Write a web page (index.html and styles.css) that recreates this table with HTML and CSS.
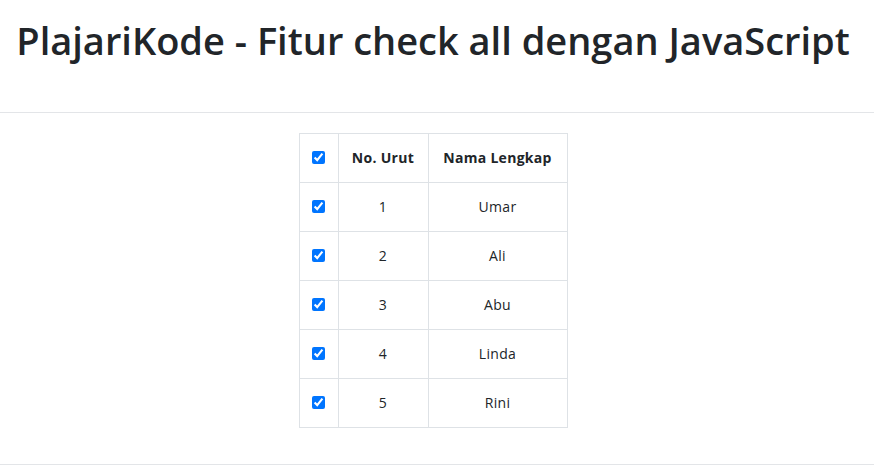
FILE: index.html
```html
<!DOCTYPE html>
<html lang="id">
<head>
<meta charset="utf-8">
<title>PlajariKode - Fitur check all dengan JavaScript</title>
<link rel="stylesheet" href="styles.css">
</head>
<body>
<header class="page-head">
  <h1 class="title">PlajariKode - Fitur check all dengan JavaScript</h1>
</header>
<hr class="rule">
<main class="content">
  <table class="data">
    <thead>
      <tr>
        <th class="col-check"><input type="checkbox" checked></th>
        <th class="col-no">No. Urut</th>
        <th class="col-name">Nama Lengkap</th>
      </tr>
    </thead>
    <tbody>
      <tr><td class="col-check"><input type="checkbox" checked></td><td>1</td><td>Umar</td></tr>
      <tr><td class="col-check"><input type="checkbox" checked></td><td>2</td><td>Ali</td></tr>
      <tr><td class="col-check"><input type="checkbox" checked></td><td>3</td><td>Abu</td></tr>
      <tr><td class="col-check"><input type="checkbox" checked></td><td>4</td><td>Linda</td></tr>
      <tr><td class="col-check"><input type="checkbox" checked></td><td>5</td><td>Rini</td></tr>
    </tbody>
  </table>
</main>
<hr class="rule">
</body>
</html>
```
FILE: styles.css
```css
html, body {
  margin: 0;
  padding: 0;
  background: #ffffff;
}
body {
  font-family: "Open Sans", "Noto Sans", "Liberation Sans", sans-serif;
  color: #212529;
  font-size: 16px;
  line-height: 1.5;
}
.page-head {
  padding: 18px 8px 0 0;
  text-align: center;
}
.title {
  margin: 0 0 48px;
  font-size: 38px;
  font-weight: 600;
  line-height: 1.2;
  letter-spacing: 0;
}
.rule {
  margin: 0;
  border: 0;
  border-top: 1px solid #e3e5e8;
}
.content {
  display: flex;
  justify-content: center;
  padding: 20px 8px 36px 0;
}
.data {
  border-collapse: collapse;
  text-align: center;
  font-size: 14px;
  letter-spacing: 0.3px;
}
.data th, .data td {
  border: 1px solid #dee2e6;
  padding: 12px 12px;
  height: 24px;
  vertical-align: middle;
}
.data th {
  font-weight: 700;
}
.data td {
  font-weight: 400;
}
.col-check {
  width: 14px;
}
.col-no {
  width: 65px;
}
.col-name {
  width: 114px;
}
.data input {
  margin: 0;
  width: 13px;
  height: 13px;
  vertical-align: middle;
  display: block;
}
```
